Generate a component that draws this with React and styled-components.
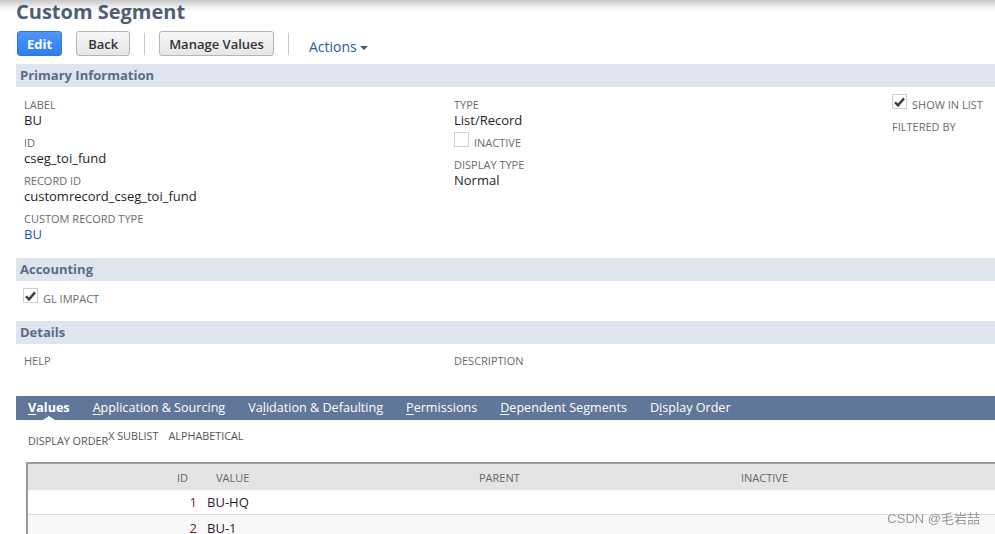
import React from "react";
import styled, { createGlobalStyle } from "styled-components";

const Global = createGlobalStyle`
  html, body { margin: 0; padding: 0; background: #fff; }
  body { font-family: "Open Sans", "Liberation Sans", sans-serif; color: #262626; }
  * { box-sizing: border-box; }
`;

const TopShadow = styled.div`
  position: fixed;
  left: 0; right: 0; top: 0;
  height: 12px;
  background: linear-gradient(to bottom, rgba(0,0,0,0.22), rgba(0,0,0,0.06) 60%, rgba(0,0,0,0));
  pointer-events: none;
  z-index: 5;
`;

const Page = styled.div`
  padding-left: 16px;
  width: 995px;
  height: 534px;
  overflow: hidden;
`;

const Title = styled.h1`
  margin: 0;
  font-size: 20px;
  line-height: 24px;
  font-weight: 700;
  color: #4d5f79;
`;

const Toolbar = styled.div`
  display: flex;
  align-items: center;
  margin-top: 7px;
  height: 25px;
`;

const Button = styled.button`
  height: 25px;
  padding: 0 ${p => p.$pad || 9}px;
  margin-left: ${p => p.$ml || 0}px;
  font-family: "Open Sans", "Liberation Sans", sans-serif;
  font-size: 13px;
  border-radius: 3px;
  cursor: pointer;
  ${p => p.$primary ? `
    background: linear-gradient(#4d97f8, #2f7ef0);
    border: 1px solid #2e78d8;
    color: #fff;
    font-weight: 700;
  ` : `
    background: linear-gradient(#f7f7f7, #e6e6e6);
    border: 1px solid #b5b5b5;
    color: #333;
    font-weight: 600;
  `}
`;

const Sep = styled.div`
  width: 1px;
  height: 22px;
  background: #c8c8c8;
  margin: 0 14px;
`;

const Actions = styled.div`
  display: flex;
  align-items: center;
  margin-left: 6px;
  margin-top: 6px;
  font-size: 14px;
  color: #2a5aa4;
  gap: 3px;
`;

const Caret = styled.span`
  width: 0; height: 0;
  border-left: 4px solid transparent;
  border-right: 4px solid transparent;
  border-top: 4px solid #555;
  margin-top: 2px;
`;

const SectionHeader = styled.div`
  margin-top: ${p => p.$mt || 0}px;
  height: 23px;
  line-height: 23px;
  padding-left: 4px;
  background: #dfe4ee;
  font-size: 13px;
  font-weight: 700;
  color: #5b6c88;
`;

const FieldGrid = styled.div`
  display: grid;
  grid-template-columns: 430px 438px 1fr;
  padding: ${p => p.$pt ?? 10}px 0 ${p => p.$pb ?? 3}px 8px;
  height: ${p => p.$h ? `${p.$h}px` : "auto"};
`;

const Column = styled.div`
  display: flex;
  flex-direction: column;
  margin-top: ${p => p.$mt || 0}px;
`;

const Field = styled.div`
  margin-bottom: ${p => p.$mb ?? 6}px;
`;

const Label = styled.div`
  font-size: 11px;
  line-height: 15px;
  color: #6b6b6b;
  text-transform: uppercase;
`;

const Value = styled.div`
  font-size: 13px;
  line-height: 17px;
  color: ${p => p.$link ? "#255aa8" : "#1f1f1f"};
`;

const CheckRow = styled.div`
  display: flex;
  align-items: flex-start;
  height: 18px;
  margin-bottom: 7px;
`;

const Box = styled.span`
  width: 15px;
  height: 15px;
  border: 1px solid #cfcfcf;
  background: #fff;
  display: flex;
  align-items: center;
  justify-content: center;
  flex: none;
`;

const CheckText = styled.span`
  font-size: 11px;
  line-height: 15px;
  padding-top: 3px;
  margin-left: 5px;
  color: #6b6b6b;
  text-transform: uppercase;
`;

const Check = ({ checked, label }) => (
  <CheckRow>
    <Box>
      {checked && (
        <svg width="11" height="10" viewBox="0 0 11 10">
          <path d="M1 5.2 L4 8.4 L10 1.4" fill="none" stroke="#3d3d3d" strokeWidth="2.4" />
        </svg>
      )}
    </Box>
    <CheckText>{label}</CheckText>
  </CheckRow>
);

const AcctBody = styled.div`
  padding: 7px 0 8px 7px;
`;

const TabBar = styled.div`
  display: flex;
  align-items: center;
  height: 24px;
  background: #607799;
  padding-left: 0.5px;
`;

const Tab = styled.div`
  position: relative;
  padding: 0 11.5px;
  font-size: 12.6px;
  line-height: 24px;
  color: #fff;
  font-weight: ${p => p.$active ? 700 : 400};
  u { text-decoration: underline; text-underline-offset: 2px; }
  ${p => p.$active && `
    &::after {
      content: "";
      position: absolute;
      left: 50%;
      bottom: 0;
      transform: translateX(-50%);
      border-left: 6px solid transparent;
      border-right: 6px solid transparent;
      border-bottom: 4px solid #fff;
    }
  `}
`;

const SortLine = styled.div`
  display: flex;
  align-items: flex-end;
  padding: 12px 0 0 12px;
  height: 28px;
  font-size: 10.8px;
  color: #555;
  text-transform: uppercase;
`;

const Sup = styled.span`
  position: relative;
  top: -5px;
  margin-right: 10px;
`;

const Table = styled.div`
  margin: 14px 0 0 10px;
  border-top: 2px solid #999;
  border-left: 2px solid #999;
`;

const Row = styled.div`
  display: grid;
  grid-template-columns: 174px 263px 262px 1fr;
  align-items: center;
  height: ${p => p.$h || 25}px;
  background: ${p => p.$bg || "#fff"};
  border-bottom: ${p => p.$line ? "1px solid #dcdcdc" : "none"};
`;

const HeadCell = styled.div`
  font-size: 11px;
  color: #666;
  text-transform: uppercase;
  text-align: ${p => p.$right ? "right" : "left"};
  padding: ${p => p.$right ? "0 14px 0 0" : "0 0 0 14px"};
`;

const Cell = styled.div`
  font-size: 13px;
  line-height: 20px;
  color: ${p => p.$c || "#2b1c2e"};
  text-align: ${p => p.$right ? "right" : "left"};
  padding: ${p => p.$right ? "0 5px 0 0" : "0 0 0 5px"};
`;

const Watermark = styled.div`
  position: fixed;
  right: 15px;
  bottom: 7px;
  font-family: "Liberation Sans", "Noto Sans CJK SC", sans-serif;
  font-size: 13px;
  color: #9a9a9a;
  z-index: 6;
`;

export default function App() {
  return (
    <>
      <Global />
      <TopShadow />
      <Page>
        <Title>Custom Segment</Title>
        <Toolbar>
          <Button $primary $ml={1}>Edit</Button>
          <Button $ml={14} $pad={11}>Back</Button>
          <Sep />
          <Button $pad={9}>Manage Values</Button>
          <Sep />
          <Actions>Actions<Caret /></Actions>
        </Toolbar>

        <SectionHeader $mt={8}>Primary Information</SectionHeader>
        <FieldGrid>
          <Column>
            <Field><Label>Label</Label><Value>BU</Value></Field>
            <Field><Label>ID</Label><Value>cseg_toi_fund</Value></Field>
            <Field><Label>Record ID</Label><Value>customrecord_cseg_toi_fund</Value></Field>
            <Field><Label>Custom Record Type</Label><Value $link>BU</Value></Field>
          </Column>
          <Column>
            <Field $mb={3}><Label>Type</Label><Value>List/Record</Value></Field>
            <Check label="Inactive" />
            <Field><Label>Display Type</Label><Value>Normal</Value></Field>
          </Column>
          <Column $mt={-3}>
            <Check checked label="Show in List" />
            <Field><Label>Filtered By</Label></Field>
          </Column>
        </FieldGrid>

        <SectionHeader $mt={6}>Accounting</SectionHeader>
        <AcctBody>
          <Check checked label="GL Impact" />
        </AcctBody>

        <SectionHeader>Details</SectionHeader>
        <FieldGrid $pt={9} $pb={0} $h={52}>
          <Column><Label>Help</Label></Column>
          <Column><Label>Description</Label></Column>
        </FieldGrid>

        <TabBar>
          <Tab $active><u>V</u>alues</Tab>
          <Tab><u>A</u>pplication &amp; Sourcing</Tab>
          <Tab>Va<u>l</u>idation &amp; Defaulting</Tab>
          <Tab><u>P</u>ermissions</Tab>
          <Tab><u>D</u>ependent Segments</Tab>
          <Tab>D<u>i</u>splay Order</Tab>
        </TabBar>

        <SortLine>
          <span>Display Order</span>
          <Sup>X Sublist</Sup>
          <Sup>Alphabetical</Sup>
        </SortLine>

        <Table>
          <Row $h={26} $bg="#e4e4e4">
            <HeadCell $right>ID</HeadCell>
            <HeadCell>Value</HeadCell>
            <HeadCell>Parent</HeadCell>
            <HeadCell>Inactive</HeadCell>
          </Row>
          <Row $line>
            <Cell $right $c="#6a2626">1</Cell>
            <Cell>BU-HQ</Cell>
            <Cell />
            <Cell />
          </Row>
          <Row $bg="#f8f8f8">
            <Cell $right $c="#6a2626">2</Cell>
            <Cell>BU-1</Cell>
            <Cell />
            <Cell />
          </Row>
        </Table>
      </Page>
      <Watermark>CSDN @毛岩喆</Watermark>
    </>
  );
}
